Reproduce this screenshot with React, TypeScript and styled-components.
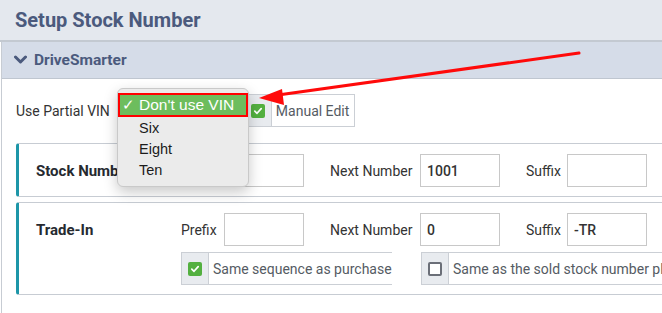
import styled, { createGlobalStyle } from 'styled-components';

const GlobalStyle = createGlobalStyle`
  html, body {
    margin: 0;
    padding: 0;
    background: #fff;
    overflow: hidden;
  }
  body {
    font-family: Roboto, "Liberation Sans", sans-serif;
    font-size: 14px;
    color: #333;
  }
`;

const Check = ({ checked }: { checked: boolean }) => (
  <Box checked={checked}>
    {checked && (
      <svg width="10" height="10" viewBox="0 0 10 10">
        <path d="M1.8 5.2 L4 7.3 L8.2 2.6" fill="none" stroke="#fff" strokeWidth="1.7" strokeLinecap="round" strokeLinejoin="round" />
      </svg>
    )}
  </Box>
);

const Field = ({ label, value, width }: { label: string; value?: string; width: number }) => (
  <FieldGroup style={{ width }}>
    <Label>{label}</Label>
    <Input>{value}</Input>
  </FieldGroup>
);

const App = () => {
  return (
    <Page>
      <GlobalStyle />
      <TitleBar>
        <Title>Setup Stock Number</Title>
      </TitleBar>
      <Panel>
        <SectionHeader>
          <svg width="13" height="10" viewBox="0 0 13 10">
            <path d="M1.5 2 L6.5 7 L11.5 2" fill="none" stroke="#4b5a7d" strokeWidth="3" strokeLinecap="round" strokeLinejoin="round" />
          </svg>
          <SectionTitle>DriveSmarter</SectionTitle>
        </SectionHeader>
        <Body>
          <VinRow>
            <Label>Use Partial VIN</Label>
            <SelectBox />
            <CheckGroup>
              <Addon>
                <Check checked />
              </Addon>
              <CheckText>Manual Edit</CheckText>
            </CheckGroup>
          </VinRow>

          <Card>
            <CardTitle>Stock Number</CardTitle>
            <CardBody>
              <FieldRow>
                <Field label="Prefix" width={123} />
                <Field label="Next Number" value="1001" width={170} />
                <Field label="Suffix" width={121} />
              </FieldRow>
            </CardBody>
          </Card>

          <Card>
            <CardTitle>Trade-In</CardTitle>
            <CardBody>
              <FieldRow>
                <Field label="Prefix" width={123} />
                <Field label="Next Number" value="0" width={170} />
                <Field label="Suffix" value="-TR" width={121} />
              </FieldRow>
              <OptionRow>
                <CheckGroup width={211}>
                  <Addon>
                    <Check checked />
                  </Addon>
                  <CheckText>Same sequence as purchase</CheckText>
                </CheckGroup>
                <CheckGroup>
                  <Addon>
                    <Check checked={false} />
                  </Addon>
                  <CheckText>Same as the sold stock number plus suffix</CheckText>
                </CheckGroup>
              </OptionRow>
            </CardBody>
          </Card>
        </Body>
      </Panel>

      <Menu>
        <MenuItem selected>
          <Tick>✓</Tick>Don't use VIN
        </MenuItem>
        <MenuItem>Six</MenuItem>
        <MenuItem>Eight</MenuItem>
        <MenuItem>Ten</MenuItem>
      </Menu>

      <Arrow width="662" height="313" viewBox="0 0 662 313">
        <line x1="579" y1="53" x2="278" y2="95" stroke="#ff0a0a" strokeWidth="3" strokeLinecap="round" />
        <polygon points="259,98 282,89 284,105" fill="#ff0a0a" />
      </Arrow>
    </Page>
  );
};

const Page = styled.div`
  position: relative;
  width: 662px;
  height: 313px;
  overflow: hidden;
`;

const TitleBar = styled.div`
  display: flex;
  align-items: center;
  height: 40px;
  padding-left: 15px;
  background: #e4e8ee;
  border-bottom: 2px solid #c3c9d1;
`;

const Title = styled.h1`
  margin: 0;
  font-size: 20px;
  font-weight: 700;
  color: #4b5a7d;
`;

const Panel = styled.div`
  width: 760px;
  margin-left: 1px;
  border-left: 1px solid #c7ccd3;
  border-bottom: 1px solid #c7ccd3;
`;

const SectionHeader = styled.div`
  display: flex;
  align-items: center;
  gap: 7px;
  height: 36px;
  padding-left: 12px;
  background: #d5dce8;
  border-bottom: 1px solid #bfc6d0;
`;

const SectionTitle = styled.span`
  font-size: 15.5px;
  font-weight: 700;
  color: #4b5a7d;
`;

const Body = styled.div`
  display: flex;
  flex-direction: column;
  padding: 15px 0 14px 14px;
`;

const VinRow = styled.div`
  display: flex;
  align-items: center;
  gap: 8px;
  height: 33px;
  margin-bottom: 16px;
`;

const Label = styled.span`
  font-size: 14px;
  color: #333;
  white-space: nowrap;
`;

const SelectBox = styled.div`
  width: 116px;
  height: 31px;
  border: 1px solid #c8c8c8;
`;

const CheckGroup = styled.div<{ width?: number }>`
  display: flex;
  flex-shrink: 0;
  height: 33px;
  width: ${(p) => (p.width ? `${p.width}px` : 'auto')};
  border: 1px solid #cbcfd5;
  box-sizing: border-box;
`;

const Addon = styled.div`
  display: flex;
  align-items: center;
  justify-content: center;
  width: 26px;
  flex-shrink: 0;
  background: #e8ebef;
  border-right: 1px solid #cbcfd5;
`;

const Box = styled.div<{ checked: boolean }>`
  display: flex;
  align-items: center;
  justify-content: center;
  width: 14px;
  height: 14px;
  box-sizing: border-box;
  border-radius: 2px;
  background: ${(p) => (p.checked ? '#53b040' : '#fff')};
  border: ${(p) => (p.checked ? 'none' : '2px solid #6b6f78')};
`;

const CheckText = styled.div`
  display: flex;
  align-items: center;
  padding: 0 5px 0 4px;
  font-size: 14px;
  color: #555b63;
  background: #fff;
  white-space: nowrap;
`;

const Card = styled.div`
  display: flex;
  width: 740px;
  margin-bottom: 5px;
  padding: 10px 0 9px 17px;
  border: 1px solid #c7ccd3;
  border-left: 3px solid #1d96a8;
  border-radius: 3px 0 0 3px;
  &:first-of-type {
    padding-bottom: 10px;
  }
`;

const CardTitle = styled.div`
  display: flex;
  align-items: center;
  width: 145px;
  height: 33px;
  flex-shrink: 0;
  font-size: 15px;
  font-weight: 700;
  color: #262a30;
`;

const CardBody = styled.div`
  display: flex;
  flex-direction: column;
  gap: 6px;
`;

const FieldRow = styled.div`
  display: flex;
  gap: 26px;
`;

const OptionRow = styled.div`
  display: flex;
  gap: 29px;
`;

const FieldGroup = styled.div`
  display: flex;
  align-items: center;
  justify-content: space-between;
  height: 33px;
`;

const Input = styled.div`
  display: flex;
  align-items: center;
  width: 80px;
  height: 33px;
  box-sizing: border-box;
  padding: 0 6px;
  border: 1px solid #c8c8c8;
  font-size: 14px;
  font-weight: 500;
  color: #333;
`;

const Menu = styled.div`
  position: absolute;
  left: 117px;
  top: 88px;
  width: 132px;
  padding: 4px 0 6px;
  box-sizing: border-box;
  background: #ebebeb;
  border: 1px solid #c9c9c9;
  border-radius: 6px;
  box-shadow: 0 5px 14px rgba(0, 0, 0, 0.22);
  font-family: "Liberation Sans", Arial, sans-serif;
`;

const MenuItem = styled.div<{ selected?: boolean }>`
  display: flex;
  align-items: center;
  height: ${(p) => (p.selected ? '20px' : '21px')};
  padding-left: ${(p) => (p.selected ? '0' : '21px')};
  font-size: ${(p) => (p.selected ? '15.5px' : '14.5px')};
  color: ${(p) => (p.selected ? '#fff' : '#1c1c1c')};
  background: ${(p) => (p.selected ? '#6dbd5d' : 'transparent')};
  border: ${(p) => (p.selected ? '2px solid #f00' : 'none')};
`;

const Tick = styled.span`
  width: 17px;
  font-size: 15px;
  padding-left: 2px;
`;

const Arrow = styled.svg`
  position: absolute;
  left: 0;
  top: 0;
  pointer-events: none;
`;

export default App;
